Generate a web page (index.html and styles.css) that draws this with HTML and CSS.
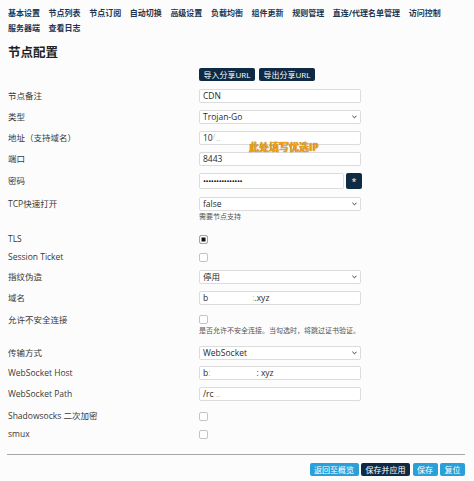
FILE: index.html
```html
<!DOCTYPE html>
<html lang="zh">
<head>
<meta charset="utf-8">
<title>节点配置</title>
<link rel="stylesheet" href="styles.css">
</head>
<body>
<nav class="nav">
  <a>基本设置</a><a>节点列表</a><a>节点订阅</a><a>自动切换</a><a>高级设置</a><a>负载均衡</a><a>组件更新</a><a>规则管理</a><a>直连/代理名单管理</a><a>访问控制</a><a>服务器端</a><a>查看日志</a>
</nav>
<h1 class="title">节点配置</h1>
<div class="share">
  <span class="btn dark">导入分享URL</span><span class="btn dark">导出分享URL</span>
</div>
<div class="form">
  <div class="row r1"><label>节点备注</label><div class="ctl"><div class="input">CDN</div></div></div>
  <div class="row r2"><label>类型</label><div class="ctl"><div class="input select"><span>Trojan-Go</span><svg class="chev" viewBox="0 0 6 4"><polyline points="0.5,0.5 3,3 5.5,0.5"/></svg></div></div></div>
  <div class="row r3"><label>地址（支持域名）</label><div class="ctl"><div class="input">10<span class="faint">⁄ ..</span></div></div></div>
  <div class="row r4"><label>端口</label><div class="ctl"><div class="input">8443</div></div></div>
  <div class="row r5"><label>密码</label><div class="ctl pw"><div class="input pwinput"><span class="dots">•••••••••••••••</span></div><span class="star">*</span></div></div>
  <div class="row r6"><label>TCP快速打开</label><div class="ctl"><div class="input select"><span>false</span><svg class="chev" viewBox="0 0 6 4"><polyline points="0.5,0.5 3,3 5.5,0.5"/></svg></div><div class="help">需要节点支持</div></div></div>
  <div class="row crow r7"><label>TLS</label><div class="ctl"><span class="check on"></span></div></div>
  <div class="row crow r8"><label>Session Ticket</label><div class="ctl"><span class="check"></span></div></div>
  <div class="row r9"><label>指纹伪造</label><div class="ctl"><div class="input select"><span>停用</span><svg class="chev" viewBox="0 0 6 4"><polyline points="0.5,0.5 3,3 5.5,0.5"/></svg></div></div></div>
  <div class="row r10"><label>域名</label><div class="ctl"><div class="input">b<span class="gap1"></span><span class="faint">:</span>.xyz</div></div></div>
  <div class="row r11"><label>允许不安全连接</label><div class="ctl"><div class="cwrap"><span class="check"></span></div><div class="help">是否允许不安全连接。当勾选时，将跳过证书验证。</div></div></div>
  <div class="row r12"><label>传输方式</label><div class="ctl"><div class="input select"><span>WebSocket</span><svg class="chev" viewBox="0 0 6 4"><polyline points="0.5,0.5 3,3 5.5,0.5"/></svg></div></div></div>
  <div class="row r13"><label>WebSocket Host</label><div class="ctl"><div class="input">b<span class="faint">:</span><span class="gap2"></span>: xyz</div></div></div>
  <div class="row r14"><label>WebSocket Path</label><div class="ctl"><div class="input">/rc<span class="faint"> ..</span></div></div></div>
  <div class="row crow r15"><label>Shadowsocks 二次加密</label><div class="ctl"><span class="check"></span></div></div>
  <div class="row crow r16"><label>smux</label><div class="ctl"><span class="check"></span></div></div>
</div>
<hr class="rule">
<div class="actions">
  <span class="btn blue">返回至概览</span><span class="btn dark">保存并应用</span><span class="btn blue">保存</span><span class="btn blue">复位</span>
</div>
<div class="note">此处填写优选IP</div>
</body>
</html>
```

FILE: styles.css
```css
html, body {
  margin: 0;
  padding: 0;
  background: #fcfcfc;
}
body {
  position: relative;
  width: 474px;
  height: 481px;
  overflow: hidden;
  font-family: "Open Sans", "Noto Sans CJK SC", sans-serif;
  font-size: 8.5px;
  color: #333;
}
.nav {
  display: flex;
  flex-wrap: wrap;
  column-gap: 8.6px;
  padding: 4.5px 8px 0 8px;
  line-height: 15px;
  font-size: 8px;
  font-weight: 700;
  color: #1d3550;
}
.nav a { white-space: nowrap; }
.title {
  margin: 9.5px 0 0 8px;
  font-size: 12.5px;
  line-height: 17px;
  font-weight: 700;
  color: #222;
}
.share {
  display: flex;
  gap: 4px;
  margin-top: 7px;
  padding-left: 199px;
}
.btn {
  display: inline-flex;
  align-items: center;
  height: 13px;
  padding: 0 4.5px;
  font-size: 8px;
  color: #fff;
  border-radius: 2px;
  white-space: nowrap;
}
.btn.dark { background: #0f2a44; }
.btn.blue { background: #2b9fd8; }
.form {
  margin-top: 8px;
  display: flex;
  flex-direction: column;
}
.row {
  display: flex;
  align-items: flex-start;
}
.row label {
  width: 199px;
  flex: none;
  padding-left: 8px;
  box-sizing: border-box;
  line-height: 14px;
  color: #383838;
}
.ctl {
  width: 162px;
}
.input {
  box-sizing: border-box;
  height: 14px;
  line-height: 12px;
  border: 1px solid #dcdcdc;
  border-radius: 2px;
  background: #fff;
  padding: 0 3px;
  color: #2a2a2a;
  white-space: nowrap;
  overflow: hidden;
}
.select {
  display: flex;
  justify-content: space-between;
  align-items: center;
}
.chev {
  width: 5px;
  height: 4px;
  fill: none;
  stroke: #333;
  stroke-width: 1.2;
}
.faint { color: #bbb; }
.gap1 { display: inline-block; width: 44px; }
.gap2 { display: inline-block; width: 46px; }
.pw {
  display: flex;
  gap: 2px;
  width: 163px;
}
.pwinput {
  flex: 1;
  height: 16px;
  line-height: 14px;
}
.dots {
  font-size: 8px;
  color: #111;
  letter-spacing: -0.4px;
}
.star {
  width: 16px;
  height: 16px;
  border-radius: 2px;
  background: #0f2a44;
  color: #fff;
  font-size: 9px;
  line-height: 18px;
  text-align: center;
}
.help {
  font-size: 7px;
  line-height: 11px;
  color: #555;
  white-space: nowrap;
}
.crow label { line-height: 18px; }
.crow .ctl {
  height: 18px;
  display: flex;
  align-items: center;
}
.check {
  display: inline-block;
  box-sizing: border-box;
  width: 9px;
  height: 9px;
  border: 1px solid #c4c4c4;
  border-radius: 2px;
  background: #fff;
}
.check.on {
  border-color: #9aa;
  box-shadow: inset 0 0 0 1.5px #fff, inset 0 0 0 5px #111;
}
.cwrap {
  height: 12px;
  display: flex;
  align-items: center;
}
.r1 { margin-bottom: 6.5px; }
.r2 { margin-bottom: 7px; }
.r3 { margin-bottom: 7px; }
.r4 { margin-bottom: 7.5px; }
.r5 { margin-bottom: 8px; }
.r5 label { line-height: 16px; }
.r6 { margin-bottom: 8px; }
.r8 { margin-bottom: 4px; }
.r9 { margin-bottom: 7px; }
.r10 { margin-bottom: 8px; }
.r11 { margin-bottom: 10px; }
.r12 { margin-bottom: 6px; }
.r13 { margin-bottom: 7px; }
.r14 { margin-bottom: 6px; }
.rule {
  margin: 11px 9px 0 7px;
  border: 0;
  border-top: 1.5px solid #a8a8a8;
  height: 0;
}
.actions {
  display: flex;
  justify-content: flex-end;
  gap: 2.5px;
  margin-top: 8px;
  padding-right: 9px;
}
.note {
  position: absolute;
  left: 249px;
  top: 140px;
  font-size: 10px;
  line-height: 14px;
  font-weight: 700;
  color: #f3a20f;
  text-shadow: 0 0 1px #7a4a00;
  white-space: nowrap;
}
```
